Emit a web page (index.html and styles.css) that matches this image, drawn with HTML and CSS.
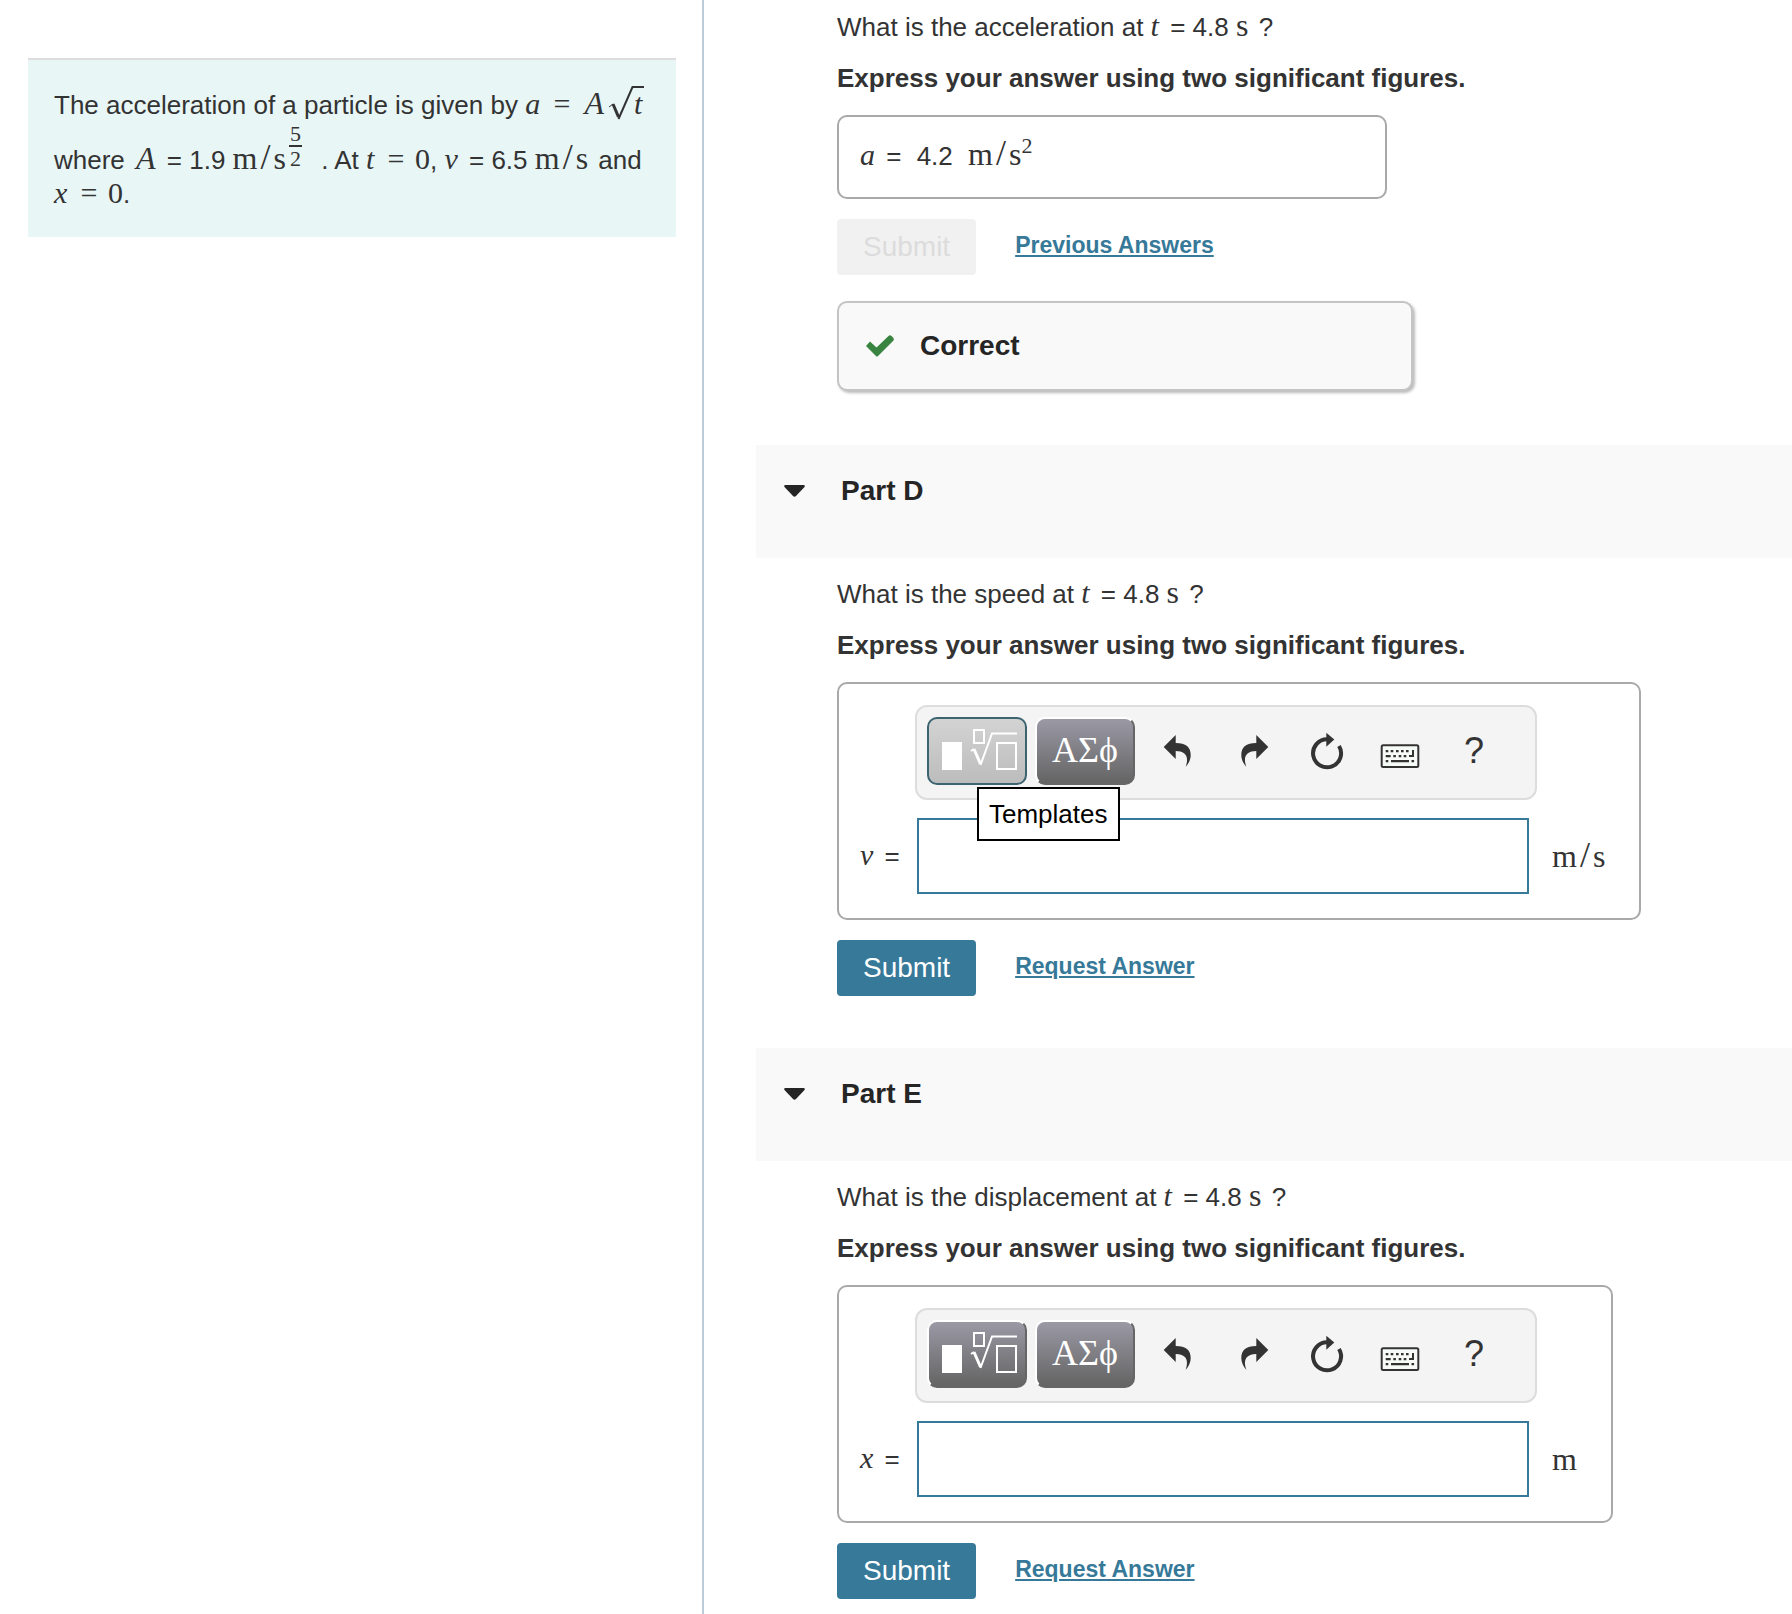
FILE: index.html
```html
<!DOCTYPE html>
<html lang="en">
<head>
  <meta charset="UTF-8" />
  <meta name="viewport" content="width=device-width, initial-scale=1.0">
  <title>Particle Acceleration</title>
  <link rel="stylesheet" href="styles.css">
</head>
<body>
  <!-- Shared icons -->
  <svg class="sprite" aria-hidden="true">
    <symbol id="icon-templates" viewBox="0 0 82 48">
      <path d="M6 16h20v28H6z" fill="currentColor"/>
      <path d="M38 4h10v13H38zM61 17h19v26H61z" fill="none" stroke="currentColor" stroke-width="2"/>
      <path d="M35 25l3-2" fill="none" stroke="currentColor" stroke-width="2"/>
      <path d="M38 23l6.500 15" fill="none" stroke="currentColor" stroke-width="3"/>
      <path d="M44.500 39L56 7.500h25" fill="none" stroke="currentColor" stroke-width="2"/>
    </symbol>
    <symbol id="icon-undo" viewBox="0 0 40 40">
      <path d="M5.700 16l12-12v8C28 12 32.700 16 32.700 24c0 4.500-2 8.500-5 11.700C31.500 25 27 20 17.700 20v8z" fill="currentColor"/>
    </symbol>
    <symbol id="icon-redo" viewBox="0 0 40 40">
      <path d="M36.300 16l-12-12v8C14 12 9.300 16 9.300 24c0 4.500 2 8.500 5 11.700C10.500 25 15 20 24.300 20v8z" fill="currentColor"/>
    </symbol>
    <symbol id="icon-reset" viewBox="0 0 40 40">
      <path d="M33 15A14 14 0 1 1 21 8.300" fill="none" stroke="currentColor" stroke-width="4"/>
      <path d="M20.300 1.700l8 6.800-8 7.200z" fill="currentColor"/>
    </symbol>
    <symbol id="icon-keyboard" viewBox="0 0 42 40">
      <rect x="2.700" y="14.300" width="36.600" height="21.600" rx="1.500" fill="#f7fbf8" stroke="currentColor" stroke-width="2"/>
      <path d="M6.700 19h2.600v2.200H6.700zM11.700 19h2.600v2.200h-2.600zM17 19h2.600v2.200H17zM22 19h2.600v2.200H22zM27 19h2.600v2.200H27zM33 19h2v7h-5v-2h3zM6.700 24h5v2.200h-5zM14.300 24h2.600v2.200h-2.600zM19.700 24h2.600v2.200h-2.600zM24.700 24h2.600v2.200h-2.600zM6.700 29h2.600v2.200H6.700zM12 29h18v2.200H12zM32.500 29h2.600v2.200h-2.600z" fill="currentColor"/>
    </symbol>
    <symbol id="icon-caret" viewBox="0 0 21 12">
      <path d="M1.500 0h18q2 0 1 2l-8.500 9q-1.500 1.500-3 0L.5 2q-1-2 1-2z" fill="currentColor"/>
    </symbol>
  </svg>

  <div class="layout">
    <aside class="sidebar">
      <div class="problem">
        <p>
          The acceleration of a particle is given by <i class="var">a</i> <span class="math eq">=</span> <i class="var cap">A</i><span class="sqrt"><svg class="radical" viewBox="0 0 36 34" aria-hidden="true"><path d="M1 21l4-3" fill="none" stroke="currentColor" stroke-width="1"/><path d="M5 18l5.500 13" fill="none" stroke="currentColor" stroke-width="3"/><path d="M10.500 33L24.500 1H36" fill="none" stroke="currentColor" stroke-width="2"/></svg><i class="var">t</i></span><br>
          where <i class="var cap">A</i> = 1.9 <span class="unit">m<span class="slash">/</span>s</span><span class="frac"><span class="num">5</span><span class="den">2</span></span> . At <i class="var">t</i> <span class="math"><span class="eq">=</span> 0</span>, <i class="var">v</i> = 6.5 <span class="unit">m<span class="slash">/</span>s</span> and<br>
          <i class="var">x</i> <span class="math"><span class="eq">=</span> 0</span>.
        </p>
      </div>
    </aside>

    <main class="parts">
      <section class="part">
        <div class="part-body first">
          <p>What is the acceleration at <i class="var">t</i> = 4.8 <span class="unit">s</span> ?</p>
          <p class="instructions">Express your answer using two significant figures.</p>
          <div class="answer-done">
            <i class="var">a</i> = <span class="value">4.2</span> <span class="unit">m<span class="slash">/</span>s<sup>2</sup></span>
          </div>
          <div class="actions">
            <button type="button" class="submit" disabled>Submit</button>
            <a href="#" class="action-link">Previous Answers</a>
          </div>
          <div class="feedback">
            <svg class="check" viewBox="0 0 28 22" aria-hidden="true"><path d="M0 11l4-4.500 6.500 6L22.500 1q1.500-1.500 3 0l1.500 1.500q1.500 1.500.5 3L12 21q-1 1-2 0z" fill="currentColor"/></svg>
            <span>Correct</span>
          </div>
        </div>
      </section>

      <section class="part">
        <header class="part-header">
          <svg class="caret" aria-hidden="true"><use href="#icon-caret"/></svg>
          <h2>Part D</h2>
        </header>
        <div class="part-body">
          <p>What is the speed at <i class="var">t</i> = 4.8 <span class="unit">s</span> ?</p>
          <p class="instructions">Express your answer using two significant figures.</p>
          <div class="answer-box">
            <div class="toolbar">
              <div class="tool-wrap">
                <button type="button" class="tool active" aria-label="Templates"><svg class="templates"><use href="#icon-templates"/></svg></button>
                <span class="tooltip" role="tooltip">Templates</span>
              </div>
              <button type="button" class="tool">ΑΣϕ</button>
              <div class="tool-icons">
                <button type="button" class="icon-btn" aria-label="Undo"><svg><use href="#icon-undo"/></svg></button>
                <button type="button" class="icon-btn" aria-label="Redo"><svg><use href="#icon-redo"/></svg></button>
                <button type="button" class="icon-btn" aria-label="Reset"><svg><use href="#icon-reset"/></svg></button>
                <button type="button" class="icon-btn" aria-label="Keyboard shortcuts"><svg class="keyboard"><use href="#icon-keyboard"/></svg></button>
                <button type="button" class="icon-btn" aria-label="Help">?</button>
              </div>
            </div>
            <label for="speed"><i class="var">v</i> =</label>
            <input type="text" id="speed">
            <span class="unit">m<span class="slash">/</span>s</span>
          </div>
          <div class="actions">
            <button type="button" class="submit">Submit</button>
            <a href="#" class="action-link">Request Answer</a>
          </div>
        </div>
      </section>

      <section class="part">
        <header class="part-header">
          <svg class="caret" aria-hidden="true"><use href="#icon-caret"/></svg>
          <h2>Part E</h2>
        </header>
        <div class="part-body last">
          <p>What is the displacement at <i class="var">t</i> = 4.8 <span class="unit">s</span> ?</p>
          <p class="instructions">Express your answer using two significant figures.</p>
          <div class="answer-box">
            <div class="toolbar">
              <button type="button" class="tool" aria-label="Templates"><svg class="templates"><use href="#icon-templates"/></svg></button>
              <button type="button" class="tool">ΑΣϕ</button>
              <div class="tool-icons">
                <button type="button" class="icon-btn" aria-label="Undo"><svg><use href="#icon-undo"/></svg></button>
                <button type="button" class="icon-btn" aria-label="Redo"><svg><use href="#icon-redo"/></svg></button>
                <button type="button" class="icon-btn" aria-label="Reset"><svg><use href="#icon-reset"/></svg></button>
                <button type="button" class="icon-btn" aria-label="Keyboard shortcuts"><svg class="keyboard"><use href="#icon-keyboard"/></svg></button>
                <button type="button" class="icon-btn" aria-label="Help">?</button>
              </div>
            </div>
            <label for="displacement"><i class="var">x</i> =</label>
            <input type="text" id="displacement">
            <span class="unit">m</span>
          </div>
          <div class="actions">
            <button type="button" class="submit">Submit</button>
            <a href="#" class="action-link">Request Answer</a>
          </div>
        </div>
      </section>
    </main>
  </div>
</body>
</html>
```
FILE: styles.css
```css
* {
  box-sizing: border-box;
}

body {
  margin: 0;
  background: #fff;
  color: #333;
  font-family: "Liberation Sans", Arial, Helvetica, sans-serif;
  font-size: 26px;
  line-height: 30px;
}

p,
h2 {
  margin: 0;
}

button,
input {
  font-family: inherit;
}

.sprite {
  display: none;
}

.layout {
  display: grid;
  grid-template-columns: 11fr 17fr;
  min-height: 100vh;
}

/* Problem statement */
.sidebar {
  padding: 58px 26px 0 28px;
  border-right: 2px solid #bccbd9;
}

.problem {
  padding: 26px 20px 26px 26px;
  background: #e8f6f6;
  border-top: 2px solid #ddd;
  line-height: 34px;
}

/* Math text */
.var,
.math,
.unit {
  font-family: "Liberation Serif", "Times New Roman", serif;
  font-size: 30px;
  line-height: 0;
}

.unit {
  margin-right: 3px;
  font-size: 32px;
  white-space: nowrap;
}

.var {
  margin-right: 4px;
}

.cap {
  margin: 0 4px;
  font-size: 32px;
}

.eq {
  margin: 0 3px 0 2px;
}

.slash {
  margin: 0 3px;
  font-size: 36px;
}

.unit sup {
  font-size: 22px;
}

.sqrt {
  white-space: nowrap;
}

.radical {
  width: 36px;
  height: 34px;
  vertical-align: -6px;
}

.sqrt .var {
  margin: 0 0 0 -10px;
}

.frac {
  display: inline-block;
  margin: 0 12px 0 0;
  font-family: "Liberation Serif", "Times New Roman", serif;
  font-size: 22px;
  line-height: 23px;
  text-align: center;
  vertical-align: 3px;
}

.num,
.den {
  display: block;
  padding: 0 1px;
}

.den {
  border-top: 2px solid #333;
}

/* Parts */
.parts {
  padding-left: 52px;
}

.part-header {
  display: flex;
  align-items: center;
  gap: 36px;
  padding: 30px 28px 51px;
  background: #f9f9f9;
  color: #252525;
}

.part-header h2 {
  font-size: 28px;
  line-height: 32px;
}

.caret {
  width: 21px;
  height: 12px;
}

.part-body {
  padding: 21px 24px 52px 81px;
}

.part-body.first {
  padding-top: 12px;
}

.part-body.last {
  padding-bottom: 15px;
}

.instructions {
  margin: 21px 0 22px;
  font-weight: bold;
}

.answer-done {
  max-width: 550px;
  padding: 24px 21px 26px;
  border: 2px solid #a9a9a9;
  border-radius: 10px;
}

.value {
  margin: 0 8px;
}

.actions {
  display: flex;
  align-items: center;
  gap: 39px;
  margin-top: 20px;
}

.submit {
  height: 56px;
  padding: 0 26px;
  border: none;
  border-radius: 4px;
  background: #367999;
  color: #fff;
  font-size: 28px;
}

.submit:disabled {
  background: #f1f1f1;
  color: #dcdcdc;
}

.action-link {
  padding-bottom: 4px;
  color: #367999;
  font-size: 23px;
  font-weight: bold;
  text-decoration-thickness: 2px;
  text-underline-offset: 2px;
}

.feedback {
  display: flex;
  align-items: center;
  gap: 26px;
  max-width: 576px;
  margin: 26px 0 2px;
  padding: 28px 27px;
  border: 2px solid #c4c4c4;
  border-radius: 10px;
  background: #f9f9f9;
  box-shadow: 2px 2px 3px #bbb;
  color: #252525;
  font-size: 28px;
  font-weight: bold;
  line-height: 30px;
}

.check {
  width: 28px;
  height: 22px;
  color: #398440;
}

/* Answer entry */
.answer-box {
  display: grid;
  grid-template-columns: auto minmax(0, 622px) auto;
  align-items: center;
  row-gap: 18px;
  width: fit-content;
  max-width: 100%;
  padding: 21px 31px 24px 21px;
  border: 2px solid #a9a9a9;
  border-radius: 10px;
}

.answer-box label {
  min-width: 55px;
}

.answer-box input {
  height: 76px;
  min-width: 0;
  margin: 0 8px 0 2px;
  padding: 0 16px;
  border: 2px solid #367999;
  background: #fff;
  font-size: 26px;
}

.answer-box > .unit {
  margin-left: 15px;
  line-height: 30px;
}

.answer-box > .unit .slash {
  line-height: 0;
}

.toolbar {
  display: flex;
  grid-column: 2;
  height: 95px;
  padding: 10px;
  border: 2px solid #ddd;
  border-radius: 12px;
  background: #f4f4f4;
}

.toolbar + label {
  grid-column: 1;
}

.tool-wrap {
  position: relative;
}

.tool {
  display: flex;
  align-items: center;
  justify-content: center;
  width: 100px;
  height: 68px;
  margin-right: 8px;
  padding: 0 0 2px;
  border: 2px solid;
  border-color: #fff #666 #666 #fff;
  border-radius: 10px;
  background: linear-gradient(#9b99a5, #646464);
  color: #fff;
  font-family: "Liberation Serif", "Times New Roman", serif;
  font-size: 36px;
  line-height: 36px;
}

.tool.active {
  border-color: #3b6370;
  background: linear-gradient(#d3d3d3, #bcbcbc);
}

.templates {
  width: 82px;
  height: 48px;
}

.tooltip {
  position: absolute;
  top: 70px;
  left: 50px;
  z-index: 1;
  padding: 0 10px;
  border: 2px solid #000;
  background: #fff;
  color: #000;
  line-height: 50px;
}

.tool-icons {
  display: flex;
  margin-left: -2px;
}

.icon-btn {
  display: flex;
  align-items: center;
  justify-content: center;
  width: 74px;
  height: 68px;
  padding: 0;
  border: none;
  background: none;
  color: #333;
  font-size: 36px;
}

.icon-btn svg {
  width: 40px;
  height: 40px;
}

.icon-btn .keyboard {
  width: 42px;
}
```
